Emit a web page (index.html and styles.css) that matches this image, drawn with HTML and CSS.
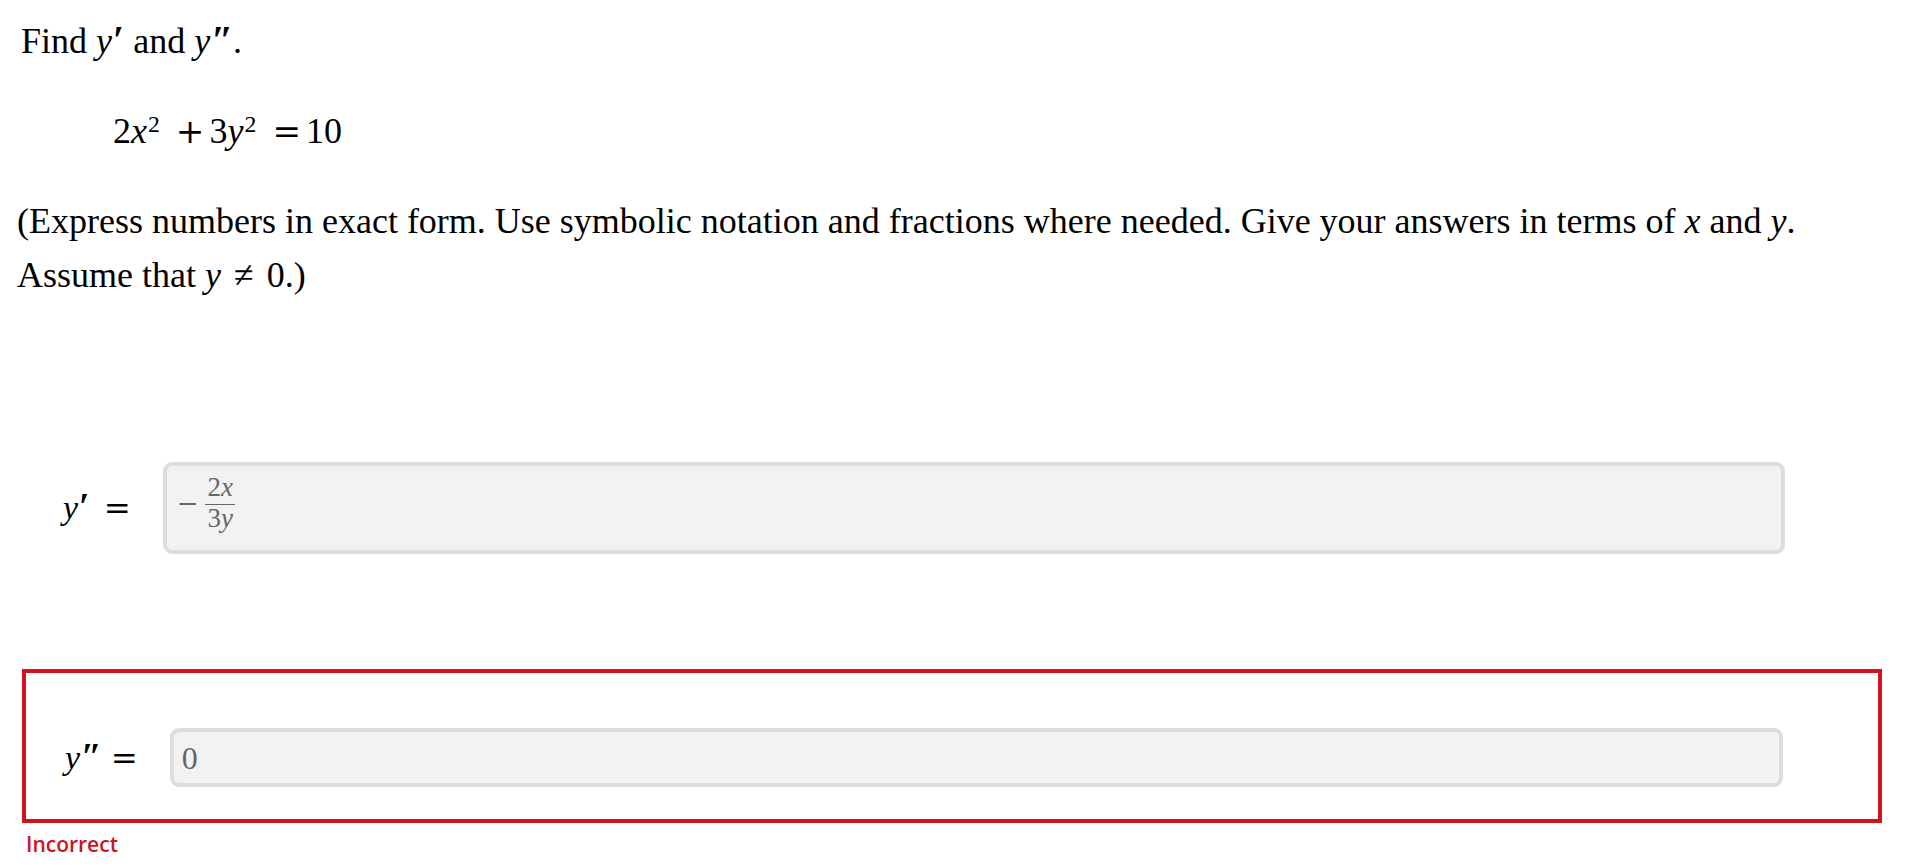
FILE: index.html
```html
<!DOCTYPE html>
<html lang="en">
<head>
  <meta charset="UTF-8" />
  <title>Implicit Differentiation</title>
  <link rel="stylesheet" href="styles.css">
</head>
<body>
  <div class="question">
    <p class="prompt">Find <span class="math"><i>y</i><span class="prime">′</span></span> and <span class="math"><i>y</i><span class="prime">″</span></span>.</p>

    <div class="display-eq">2<i>x</i><sup>2</sup><span class="op bin">+</span>3<i>y</i><sup>2</sup><span class="op rel">=</span>10</div>

    <p class="note">(Express numbers in exact form. Use symbolic notation and fractions where needed. Give your answers in terms of <i>x</i> and <i>y</i>.<br>Assume that <i>y</i> <span class="neq">≠</span> 0.)</p>

    <!-- first derivative -->
    <div class="answer">
      <div class="label"><i>y</i><span class="prime">′</span><span class="op rel">=</span></div>
      <div class="field field-frac">
        <span class="neg">−</span>
        <span class="frac">
          <span class="num">2<i>x</i></span>
          <span class="den">3<i>y</i></span>
        </span>
      </div>
    </div>

    <!-- second derivative, marked wrong -->
    <div class="answer-box incorrect">
      <div class="answer">
        <div class="label"><i>y</i><span class="prime double">″</span><span class="op rel">=</span></div>
        <div class="field field-short"><span class="value">0</span></div>
      </div>
    </div>
    <div class="feedback">Incorrect</div>
  </div>
</body>
</html>
```

FILE: styles.css
```css
body { margin: 0; background: #fff; color: #000; font-family: "Liberation Serif", "Times New Roman", serif; }
.question { padding: 0 28px 0 17px; }

.prompt { margin: 16px 0 0; padding-left: 4px; font-size: 36px; line-height: 50px; }
.display-eq { margin: 40px 0 0 96px; font-size: 36px; line-height: 50px; }
.note { margin: 38px 0 0; font-size: 36px; line-height: 54px; }

i { font-style: italic; }
sup { font-size: 0.66em; line-height: 0; vertical-align: 0.45em; margin-left: 1px; }
.prime { font-weight: bold; font-size: 1.1em; line-height: 0; margin-left: 1px; }
.op { font-family: "DejaVu Serif", serif; font-weight: normal; font-size: 0.95em; }
.bin { margin: 0 5px 0 16px; }
.rel { margin: 0 5px 0 16px; }
.neq { margin: 0 4px; }

.answer { display: flex; align-items: center; gap: 32px; padding: 0 97px 0 41px; }
.question > .answer { margin: 160px 0 0 5px; }
.label { font-size: 34px; line-height: 1; white-space: nowrap; }
.label .rel { margin: 0 0 0 14px; }
.label .double { margin-right: -5px; }

.field { flex: 1; display: flex; align-items: center; box-sizing: border-box; padding: 0 10px; border: 4px solid #dddddd; border-radius: 9px; background: #f2f2f2; color: #666; font-size: 32px; line-height: 1; }
.field-frac { height: 92px; padding-bottom: 10px; }
.field-short { height: 59px; padding-left: 8px; }

.neg { font-family: "DejaVu Serif", serif; font-size: 26px; margin-right: 7px; }
.frac { display: inline-flex; flex-direction: column; align-items: center; font-size: 27px; line-height: 1; }
.num { padding: 0 2px 3px; }
.den { align-self: stretch; text-align: center; border-top: 1.5px solid #666; }

.answer-box { margin: 115px 0 0 5px; padding: 55px 0 32px; border: 4px solid #d0121f; }
.answer-box .answer { padding-left: 39px; padding-right: 95px; }

.feedback { margin: 7px 0 0 9px; color: #d0121f; font-family: "Open Sans", sans-serif; font-weight: 600; font-size: 21px; line-height: 28px; }
```
